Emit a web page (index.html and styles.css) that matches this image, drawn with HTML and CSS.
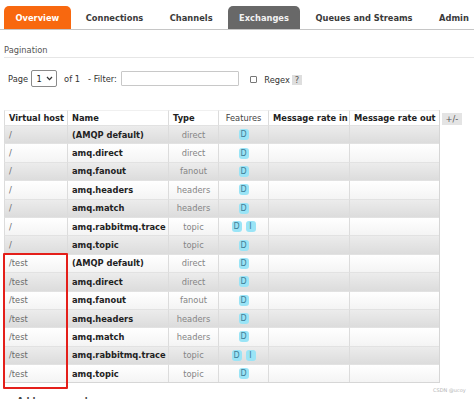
FILE: index.html
```html
<!DOCTYPE html>
<html lang="en">
<head>
  <meta charset="UTF-8">
  <title>RabbitMQ Management - Exchanges</title>
  <link rel="stylesheet" href="styles.css">
</head>
<body>
  <ul class="tabs">
    <li class="tab tab-overview">Overview</li>
    <li class="tab">Connections</li>
    <li class="tab">Channels</li>
    <li class="tab tab-current">Exchanges</li>
    <li class="tab">Queues and Streams</li>
    <li class="tab">Admin</li>
  </ul>

  <div class="main">
    <h2 class="section-title">Pagination</h2>

    <div class="pager">
      <span class="pager-label">Page</span>
      <span class="page-select">
        <span>1</span>
        <svg width="7" height="5" viewBox="0 0 7 5"><path d="M1 1 L3.5 3.6 L6 1" fill="none" stroke="#333" stroke-width="1.3"/></svg>
      </span>
      <span class="pager-of">of 1</span>
      <span class="pager-filter">- Filter:</span>
      <span class="filter-input"></span>
      <span class="checkbox"></span>
      <span class="pager-regex">Regex</span>
      <span class="help">?</span>
    </div>

    <div class="table-wrap">
      <table class="list">
        <colgroup>
          <col style="width:63px">
          <col style="width:101px">
          <col style="width:50px">
          <col style="width:50px">
          <col style="width:81px">
          <col style="width:90px">
        </colgroup>
        <thead>
          <tr>
            <th>Virtual host</th>
            <th>Name</th>
            <th>Type</th>
            <th class="plain">Features</th>
            <th>Message rate in</th>
            <th>Message rate out</th>
          </tr>
        </thead>
        <tbody>
          <tr class="alt1"><td class="vhost">/</td><td class="name">(AMQP default)</td><td class="type">direct</td><td class="features"><span class="flag">D</span></td><td></td><td></td></tr>
          <tr class="alt2"><td class="vhost">/</td><td class="name">amq.direct</td><td class="type">direct</td><td class="features"><span class="flag">D</span></td><td></td><td></td></tr>
          <tr class="alt1"><td class="vhost">/</td><td class="name">amq.fanout</td><td class="type">fanout</td><td class="features"><span class="flag">D</span></td><td></td><td></td></tr>
          <tr class="alt2"><td class="vhost">/</td><td class="name">amq.headers</td><td class="type">headers</td><td class="features"><span class="flag">D</span></td><td></td><td></td></tr>
          <tr class="alt1"><td class="vhost">/</td><td class="name">amq.match</td><td class="type">headers</td><td class="features"><span class="flag">D</span></td><td></td><td></td></tr>
          <tr class="alt2"><td class="vhost">/</td><td class="name">amq.rabbitmq.trace</td><td class="type">topic</td><td class="features"><span class="flag">D</span><span class="flag">I</span></td><td></td><td></td></tr>
          <tr class="alt1"><td class="vhost">/</td><td class="name">amq.topic</td><td class="type">topic</td><td class="features"><span class="flag">D</span></td><td></td><td></td></tr>
          <tr class="alt2"><td class="vhost">/test</td><td class="name">(AMQP default)</td><td class="type">direct</td><td class="features"><span class="flag">D</span></td><td></td><td></td></tr>
          <tr class="alt1"><td class="vhost">/test</td><td class="name">amq.direct</td><td class="type">direct</td><td class="features"><span class="flag">D</span></td><td></td><td></td></tr>
          <tr class="alt2"><td class="vhost">/test</td><td class="name">amq.fanout</td><td class="type">fanout</td><td class="features"><span class="flag">D</span></td><td></td><td></td></tr>
          <tr class="alt1"><td class="vhost">/test</td><td class="name">amq.headers</td><td class="type">headers</td><td class="features"><span class="flag">D</span></td><td></td><td></td></tr>
          <tr class="alt2"><td class="vhost">/test</td><td class="name">amq.match</td><td class="type">headers</td><td class="features"><span class="flag">D</span></td><td></td><td></td></tr>
          <tr class="alt1"><td class="vhost">/test</td><td class="name">amq.rabbitmq.trace</td><td class="type">topic</td><td class="features"><span class="flag">D</span><span class="flag">I</span></td><td></td><td></td></tr>
          <tr class="alt2"><td class="vhost">/test</td><td class="name">amq.topic</td><td class="type">topic</td><td class="features"><span class="flag">D</span></td><td></td><td></td></tr>
        </tbody>
      </table>
      <span class="toggle">+/-</span>
      <div class="highlight"></div>
    </div>

    <p class="add-link">&#9656; Add a new exchange</p>
  </div>

  <span class="watermark">CSDN @ucoy</span>
</body>
</html>
```

FILE: styles.css
```css
body {
  margin: 0;
  font-family: "DejaVu Sans", Verdana, sans-serif;
  font-size: 8.3px;
  color: #333;
  background: #fff;
  height: 399px;
  overflow: hidden;
  position: relative;
}
.tabs {
  display: flex;
  gap: 3.5px;
  list-style: none;
  margin: 0;
  padding: 6px 0 0 4px;
  border-bottom: 1px solid #c6c6c6;
}
.tab {
  height: 23px;
  line-height: 24px;
  padding: 0 11.5px;
  font-weight: bold;
  color: #3a3a3a;
  border-radius: 5px 5px 0 0;
  white-space: nowrap;
}
.tab-overview {
  background: #f8680f;
  color: #fff;
}
.tab-current {
  background: #686868;
  color: #f2f2f2;
}
.main {
  padding: 0 0 0 4px;
}
.section-title {
  margin: 15px 0 0;
  padding-bottom: 1px;
  font-size: 8.3px;
  font-weight: normal;
  line-height: 11px;
  color: #555;
  border-bottom: 1px solid #e6e6e6;
}
.pager {
  display: flex;
  align-items: center;
  height: 17px;
  margin-top: 12px;
  padding-left: 4px;
  color: #333;
}
.page-select {
  display: flex;
  align-items: center;
  justify-content: space-between;
  box-sizing: border-box;
  width: 26px;
  height: 17px;
  margin-left: 2.5px;
  padding: 0 3px 0 5px;
  border: 1px solid #8a8a8a;
  border-radius: 2px;
  color: #222;
}
.pager-of {
  margin-left: 7.5px;
}
.pager-filter {
  margin-left: 8px;
}
.filter-input {
  box-sizing: border-box;
  width: 118px;
  height: 15px;
  margin-left: 4px;
  border: 1px solid #c8c8c8;
  border-radius: 1px;
}
.checkbox {
  box-sizing: border-box;
  width: 7px;
  height: 7px;
  margin-left: 11px;
  margin-top: 2px;
  border: 1px solid #777;
  border-radius: 1px;
}
.pager-regex {
  margin-left: 7.5px;
  margin-top: 2px;
}
.help {
  width: 10px;
  height: 10px;
  margin-left: 2px;
  margin-top: 3px;
  line-height: 10px;
  text-align: center;
  background: #dedede;
  color: #555;
}
.table-wrap {
  position: relative;
  display: flex;
  align-items: flex-start;
  margin-top: 23px;
}
.list {
  table-layout: fixed;
  width: 436px;
  border-collapse: separate;
  border-spacing: 0;
  border-right: 1px solid #d6d6d6;
  border-bottom: 1px solid #d6d6d6;
}
.list th,
.list td {
  box-sizing: border-box;
  padding: 0 4px;
  white-space: nowrap;
  overflow: hidden;
  vertical-align: middle;
  border-left: 1px solid #dcdcdc;
  border-top: 1px solid #e2e2e2;
}
.list th {
  height: 15px;
  line-height: 13px;
  text-align: left;
  font-weight: bold;
  color: #222;
  background: #fff;
  border-top-color: #f0f0f0;
}
.list th.plain {
  font-weight: normal;
  text-align: center;
  color: #444;
}
.list td {
  height: 18.4px;
  line-height: 12px;
}
.alt1 td {
  background: linear-gradient(to bottom, #ececec 0%, #dcdcdc 100%);
}
.alt2 td {
  background: linear-gradient(to bottom, #ffffff 0%, #f4f4f4 100%);
}
.vhost {
  color: #6a6a6a;
}
.name {
  font-weight: bold;
  color: #222;
}
.type {
  text-align: center;
  color: #858585;
}
.features {
  text-align: center;
  font-size: 0;
}
.flag {
  display: inline-block;
  width: 10px;
  height: 11px;
  line-height: 11px;
  margin: 0 2px;
  border-radius: 3px;
  background: #9ae4f6;
  color: #3f7f98;
  font-size: 8px;
  text-align: center;
  vertical-align: middle;
}
.toggle {
  margin: 2.5px 0 0 2px;
  padding: 0 3.5px;
  height: 12px;
  line-height: 12px;
  background: #e4e4e4;
  color: #555;
}
.highlight {
  position: absolute;
  left: -1.5px;
  top: 142.5px;
  width: 65px;
  height: 136.5px;
  box-sizing: border-box;
  border: 2px solid #e41f1a;
  border-radius: 1px;
}
.add-link {
  margin: 13px 0 0 6px;
  font-weight: bold;
  color: #444;
}
.watermark {
  position: absolute;
  left: 433px;
  top: 387px;
  font-size: 5px;
  color: #b4b4b4;
}
```
